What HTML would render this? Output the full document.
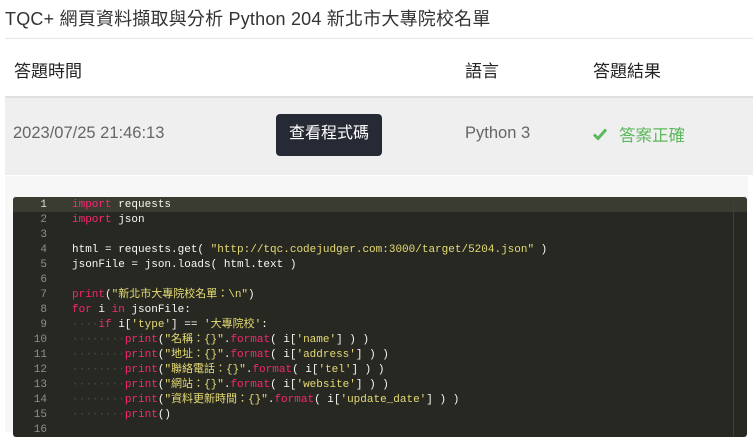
<!DOCTYPE html>
<html><head><meta charset="utf-8"><style>
body{margin:0;width:753px;height:432px;overflow:hidden;background:#fff;font-family:"Liberation Sans","Noto Sans CJK TC",sans-serif;color:#222;position:relative}
.a{position:absolute;white-space:nowrap}
.title{left:5px;top:5px;font-size:18px;color:#333;letter-spacing:0.2px}
.hr{left:5px;right:0;top:38px;height:1px;background:#e6e6e6}
.th{top:57px;font-size:17px;color:#222}
.row{left:5px;right:0;top:96px;height:77px;background:#efefef;border-top:2px solid #e0e0e0}
.btn{left:276px;top:114px;width:106px;height:42px;background:#252a35;border-radius:4px;color:#fff;font-size:16px;text-align:center;line-height:40px}
.td{top:124px;font-size:16.5px;color:#666}
.panel{left:5px;top:176px;width:743px;height:256px;background:#f7f7f8}
.ed{left:13px;top:197px;width:734px;height:240px;background:#272822;border-radius:3px;overflow:hidden}
.act{position:absolute;left:0;top:0;width:734px;height:15px;background:#3a3b31}
.sb{position:absolute;left:720px;top:0;width:1px;height:240px;background:#3e3f38}
.code{position:absolute;left:0;top:0;font-family:"Liberation Mono","Noto Sans CJK TC",monospace;font-size:11px;line-height:15px;color:#f8f8f2}
.ln{position:absolute;left:0;width:34px;text-align:right;color:#8f908a}
.l{position:absolute;left:59px;white-space:pre}
.k{color:#f92672}.s{color:#e6db74}.f{color:#fd971f}
.g{color:#4a4b44}
</style></head><body>
<div class="a title">TQC+ 網頁資料擷取與分析 Python 204 新北市大專院校名單</div>
<div class="a hr"></div>
<div class="a th" style="left:14px">答題時間</div>
<div class="a th" style="left:465px">語言</div>
<div class="a th" style="left:593px">答題結果</div>
<div class="a row"></div>
<div class="a td" style="left:13px">2023/07/25 21:46:13</div>
<div class="a btn">查看程式碼</div>
<div class="a td" style="left:465px">Python 3</div>
<svg class="a" style="left:592px;top:127px" width="16" height="14" viewBox="0 0 16 14"><path d="M2 7.5 L6 11.5 L14 2.5" fill="none" stroke="#5cb85c" stroke-width="3"/></svg>
<div class="a td" style="left:619px;top:122px;color:#5cb85c">答案正確</div>
<div class="a panel"></div>
<div class="a ed">
<div class="act"></div><div class="sb"></div>
<div class="code" style="top:1px">
<div class="ln" style="top:0;color:#ddd">1</div><div class="ln" style="top:15px">2</div><div class="ln" style="top:30px">3</div><div class="ln" style="top:45px">4</div><div class="ln" style="top:60px">5</div><div class="ln" style="top:75px">6</div><div class="ln" style="top:90px">7</div><div class="ln" style="top:105px">8</div><div class="ln" style="top:120px">9</div><div class="ln" style="top:135px">10</div><div class="ln" style="top:150px">11</div><div class="ln" style="top:165px">12</div><div class="ln" style="top:180px">13</div><div class="ln" style="top:195px">14</div><div class="ln" style="top:210px">15</div><div class="ln" style="top:225px">16</div>
<div class="l" style="top:0"><span class="k">import</span> requests</div>
<div class="l" style="top:15px"><span class="k">import</span> json</div>
<div class="l" style="top:45px">html = requests.get( <span class="s">"http://tqc.codejudger.com:3000/target/5204.json"</span> )</div>
<div class="l" style="top:60px">jsonFile = json.loads( html.text )</div>
<div class="l" style="top:90px"><span class="k">print</span>(<span class="s">"新北市大專院校名單：\n"</span>)</div>
<div class="l" style="top:105px"><span class="k">for</span> i <span class="k">in</span> jsonFile:</div>
<div class="l" style="top:120px"><span class="g">····</span><span class="k">if</span> i[<span class="s">'type'</span>] == <span class="s">'大專院校'</span>:</div>
<div class="l" style="top:135px"><span class="g">········</span><span class="k">print</span>(<span class="s">"名稱：{}"</span>.<span class="k">format</span>( i[<span class="s">'name'</span>] ) )</div>
<div class="l" style="top:150px"><span class="g">········</span><span class="k">print</span>(<span class="s">"地址：{}"</span>.<span class="k">format</span>( i[<span class="s">'address'</span>] ) )</div>
<div class="l" style="top:165px"><span class="g">········</span><span class="k">print</span>(<span class="s">"聯絡電話：{}"</span>.<span class="k">format</span>( i[<span class="s">'tel'</span>] ) )</div>
<div class="l" style="top:180px"><span class="g">········</span><span class="k">print</span>(<span class="s">"網站：{}"</span>.<span class="k">format</span>( i[<span class="s">'website'</span>] ) )</div>
<div class="l" style="top:195px"><span class="g">········</span><span class="k">print</span>(<span class="s">"資料更新時間：{}"</span>.<span class="k">format</span>( i[<span class="s">'update_date'</span>] ) )</div>
<div class="l" style="top:210px"><span class="g">········</span><span class="k">print</span>()</div>
</div></div>
</body></html>
